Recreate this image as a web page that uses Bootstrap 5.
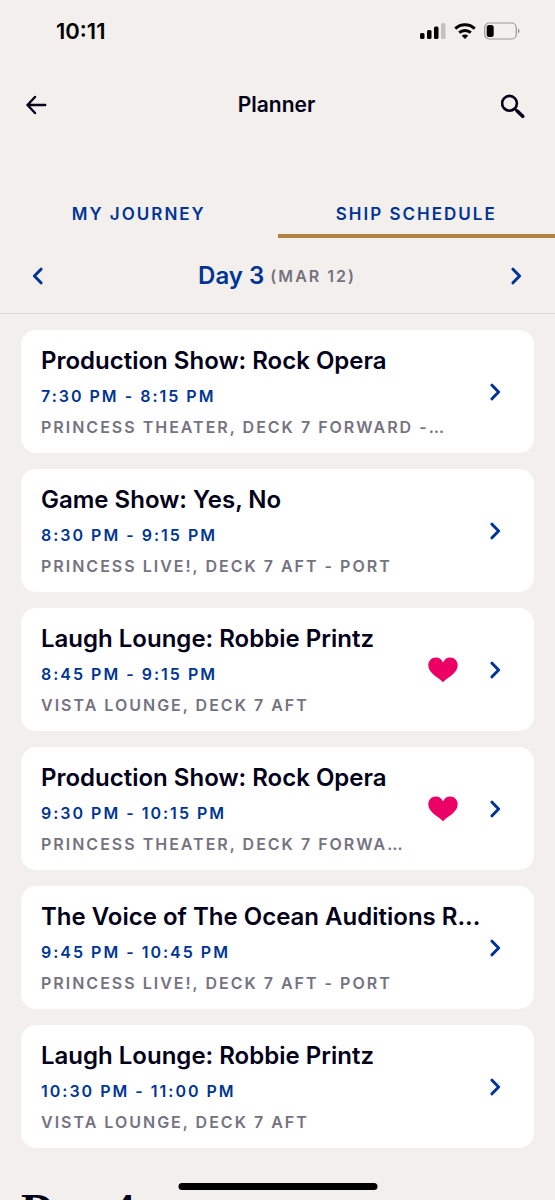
<!DOCTYPE html>
<html lang="en">
<head>
<meta charset="utf-8">
<meta name="viewport" content="width=device-width, initial-scale=1">
<title>Planner</title>
<link href="https://cdn.jsdelivr.net/npm/bootstrap@5.3.0/dist/css/bootstrap.min.css" rel="stylesheet">
<style>
  :root { --sand: #f3efec; --royal: #003595; --ink: #020019; --slate: #74737f; --gold: #ae8344; --rose: #eb0066; }
  body { background: var(--sand); color: var(--ink); font-family: Inter, "Liberation Sans", sans-serif; font-weight: 600; }
  svg { display: block; }
  .screen { height: 100vh; }
  .status { height: 62px; padding: 0 35px 0 56px; font-size: 22px; line-height: 26px; color: #000; }
  .topbar { height: 86px; padding: 0 28px 0 26px; }
  .topbar h1 { font-size: 21px; line-height: 26px; font-weight: 600; }
  .plain { background: none; border: 0; padding: 0; color: inherit; }
  .tabs { margin-top: 42px; }
  .tab-link { padding: 12px 0 8px; font-size: 17px; line-height: 24px; letter-spacing: 2px; color: var(--royal); text-decoration: none; border-bottom: 4px solid transparent; }
  .tab-link.active { border-color: var(--gold); }
  .daybar { height: 76px; padding: 0 33px 0 32px; color: var(--royal); border-bottom: 1px solid #dedad8; }
  .daybar h2 { gap: 6px; font-size: 24px; line-height: 30px; font-weight: 600; }
  .daybar .date { font-size: 16px; letter-spacing: 2px; color: var(--slate); }
  .agenda { padding: 16px 21px 0; }
  .event { background: #fff; border-radius: 15px; padding: 15px 33px 15px 20px; color: var(--ink); text-decoration: none; }
  .event-text { gap: 9px; }
  .event-text h3 { font-size: 24px; line-height: 31px; font-weight: 600; }
  .event-text p { font-size: 16px; line-height: 22px; letter-spacing: 2px; }
  .event-text .time { color: var(--royal); }
  .event-text .place { color: var(--slate); }
  .go { color: var(--royal); }
  .fav { color: var(--rose); margin-right: 32px; }
  .next-day { font-family: "Liberation Serif", serif; font-size: 46px; line-height: 52px; font-weight: 700; margin-top: 37px; padding: 0 21px; }
  .home-bar { bottom: 10px; width: 199px; height: 7px; border-radius: 4px; background: #000; }
</style>
</head>
<body>
<svg width="0" height="0" class="position-absolute" aria-hidden="true">
  <symbol id="chev" viewBox="0 0 11 18"><path d="M2 2.2 8.6 9 2 15.8" fill="none" stroke="currentColor" stroke-width="3" stroke-linecap="round" stroke-linejoin="round"/></symbol>
  <symbol id="chev-left" viewBox="0 0 11 18"><path d="M9 2.2 2.4 9 9 15.8" fill="none" stroke="currentColor" stroke-width="3" stroke-linecap="round" stroke-linejoin="round"/></symbol>
  <symbol id="heart" viewBox="0 0 30 26"><path d="M15 25.2C11 20.8.3 16.6.3 8.3.3 4 3.500.5 7.900.5 11 .5 13.800 2.300 15 5.600 16.200 2.300 19 .5 22.100.5 26.500.5 29.700 4 29.700 8.300 29.700 16.600 19 20.800 15 25.200Z" fill="currentColor"/></symbol>
</svg>
<div class="screen d-flex flex-column overflow-hidden position-relative">
  <div class="status d-flex align-items-center justify-content-between flex-shrink-0">
    <span>10:11</span>
    <span class="d-flex align-items-center gap-2">
      <svg width="26" height="18" viewBox="0 0 26 18"><rect x="0" y="11" width="4.500" height="6" rx="1.500"/><rect x="7" y="8" width="4.500" height="9" rx="1.500"/><rect x="14" y="4.500" width="4.500" height="12.500" rx="1.500"/><rect x="21" y="1" width="4.500" height="16" rx="1.500" fill="#c3c0be"/></svg>
      <svg width="22" height="18" viewBox="0 0 22 18"><g fill="none" stroke="#000" stroke-width="3"><path d="M1.300 6.700a14 14 0 0 1 19.400 0"/><path d="M5.200 10.700a8.400 8.400 0 0 1 11.600 0"/></g><path d="M11 17 7.800 13.800a4.600 4.600 0 0 1 6.400 0Z"/></svg>
      <svg width="36" height="18" viewBox="0 0 36 18"><rect x=".7" y="1" width="31.500" height="16" rx="4.500" fill="none" stroke="#9a9795" stroke-width="1.200"/><rect x="2.700" y="3" width="7" height="12" rx="2.500"/><path d="M34 6.500q3 2.500 0 5Z" fill="#8a8785"/></svg>
    </span>
  </div>
  <header class="topbar d-flex align-items-center justify-content-between flex-shrink-0">
    <button class="plain" type="button" aria-label="Back"><svg width="26" height="20" viewBox="0 0 26 20"><path d="M19.200 10H1.500M9 2 1.500 10 9 18" fill="none" stroke="currentColor" stroke-width="2.400" stroke-linecap="round" stroke-linejoin="round"/></svg></button>
    <h1 class="m-0">Planner</h1>
    <button class="plain" type="button" aria-label="Search"><svg width="26" height="26" viewBox="3 -2 26 26"><g fill="none" stroke="currentColor" stroke-linecap="round"><circle cx="11.500" cy="9.300" r="7.400" stroke-width="2.600"/><path d="m17 14.800 2.500 2.500" stroke-width="2.500"/><path d="m19.500 17.300 5.200 5" stroke-width="3.600"/></g></svg></button>
  </header>
  <nav class="tabs row g-0 text-center flex-shrink-0" aria-label="Planner views">
    <a class="tab-link col-6" href="#journey">MY JOURNEY</a>
    <a class="tab-link active col-6" href="#schedule" aria-current="page">SHIP SCHEDULE</a>
  </nav>
  <div class="daybar d-flex align-items-center justify-content-between flex-shrink-0">
    <button class="plain" type="button" aria-label="Previous day"><svg width="11" height="18"><use href="#chev-left"/></svg></button>
    <h2 class="m-0 d-flex align-items-center">Day 3 <span class="date">(MAR 12)</span></h2>
    <button class="plain" type="button" aria-label="Next day"><svg width="11" height="18"><use href="#chev"/></svg></button>
  </div>
  <main class="agenda d-flex flex-column gap-3 text-nowrap" id="schedule">
    <a class="event d-flex align-items-center" href="#e1">
      <div class="event-text d-flex flex-column flex-fill"><h3 class="m-0">Production Show: Rock Opera</h3><p class="time m-0">7:30 PM - 8:15 PM</p><p class="place m-0">PRINCESS THEATER, DECK 7 FORWARD -…</p></div>
      <svg class="go" width="11" height="18"><use href="#chev"/></svg>
    </a>
    <a class="event d-flex align-items-center" href="#e2">
      <div class="event-text d-flex flex-column flex-fill"><h3 class="m-0">Game Show: Yes, No</h3><p class="time m-0">8:30 PM - 9:15 PM</p><p class="place m-0">PRINCESS LIVE!, DECK 7 AFT - PORT</p></div>
      <svg class="go" width="11" height="18"><use href="#chev"/></svg>
    </a>
    <a class="event d-flex align-items-center" href="#e3">
      <div class="event-text d-flex flex-column flex-fill"><h3 class="m-0">Laugh Lounge: Robbie Printz</h3><p class="time m-0">8:45 PM - 9:15 PM</p><p class="place m-0">VISTA LOUNGE, DECK 7 AFT</p></div>
      <svg class="fav" width="30" height="26"><use href="#heart"/></svg>
      <svg class="go" width="11" height="18"><use href="#chev"/></svg>
    </a>
    <a class="event d-flex align-items-center" href="#e4">
      <div class="event-text d-flex flex-column flex-fill"><h3 class="m-0">Production Show: Rock Opera</h3><p class="time m-0">9:30 PM - 10:15 PM</p><p class="place m-0">PRINCESS THEATER, DECK 7 FORWA…</p></div>
      <svg class="fav" width="30" height="26"><use href="#heart"/></svg>
      <svg class="go" width="11" height="18"><use href="#chev"/></svg>
    </a>
    <a class="event d-flex align-items-center" href="#e5">
      <div class="event-text d-flex flex-column flex-fill"><h3 class="m-0">The Voice of The Ocean Auditions R...</h3><p class="time m-0">9:45 PM - 10:45 PM</p><p class="place m-0">PRINCESS LIVE!, DECK 7 AFT - PORT</p></div>
      <svg class="go" width="11" height="18"><use href="#chev"/></svg>
    </a>
    <a class="event d-flex align-items-center" href="#e6">
      <div class="event-text d-flex flex-column flex-fill"><h3 class="m-0">Laugh Lounge: Robbie Printz</h3><p class="time m-0">10:30 PM - 11:00 PM</p><p class="place m-0">VISTA LOUNGE, DECK 7 AFT</p></div>
      <svg class="go" width="11" height="18"><use href="#chev"/></svg>
    </a>
  </main>
  <h2 class="next-day mb-0 flex-shrink-0">Day 4</h2>
  <div class="home-bar position-absolute start-50 translate-middle-x"></div>
</div>
<script src="https://cdn.jsdelivr.net/npm/bootstrap@5.3.0/dist/js/bootstrap.bundle.min.js"></script>
</body>
</html>
